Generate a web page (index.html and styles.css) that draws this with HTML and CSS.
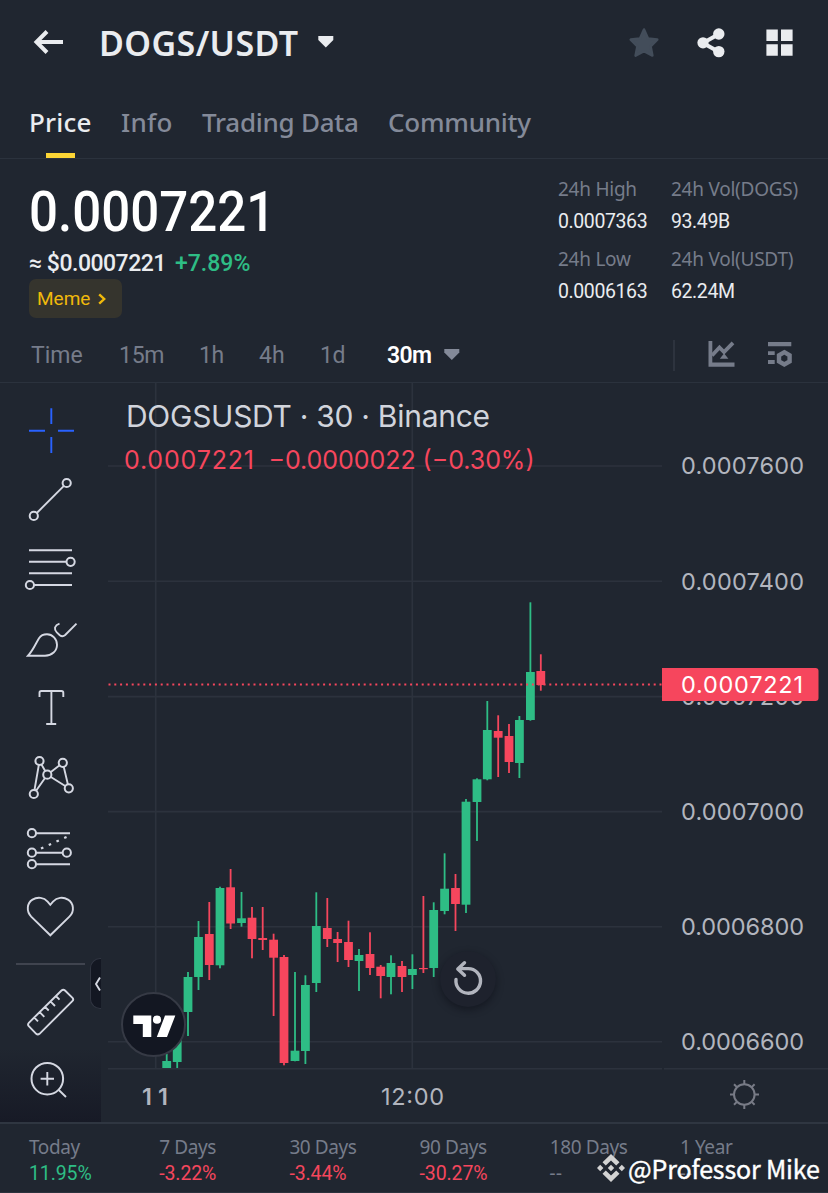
FILE: index.html
```html
<!DOCTYPE html>
<html lang="en">
<head>
    <meta charset="UTF-8">
    <meta name="viewport" content="width=device-width, initial-scale=1.0">
    <title>DOGS/USDT</title>
    <link rel="stylesheet" href="styles.css">
</head>
<body>
    <header class="topbar">
        <svg class="back" viewBox="0 0 32 28"><path d="M30 14H4M14 3.5L3.5 14L14 24.5"/></svg>
        <h1 class="pair">DOGS/USDT</h1>
        <svg class="pair-caret" viewBox="0 0 16 12"><path d="M0.3 0H15.3V4L7.8 11.5L0.3 4Z"/></svg>
        <div class="actions">
            <svg class="star" viewBox="0 0 32 32"><path d="M16 2.5L20 11.4L29.3 12.6L22.6 19.3L24.4 28.6L16 24.2L7.6 28.6L9.4 19.3L2.7 12.6L12 11.4Z"/></svg>
            <svg class="share" viewBox="0 0 32 32"><path d="M24 7L8 16L24 25"/><circle cx="8" cy="15.8" r="5.6"/><circle cx="23.8" cy="7" r="5.7"/><circle cx="23.8" cy="24.6" r="5.7"/></svg>
            <svg class="grid-icon" viewBox="0 0 32 32"><path d="M3.4 2.5h11.4v11.4H3.4zM18 2.5h11.6v11.4H18zM3.4 17.2h11.4v11.6H3.4zM18 17.2h11.6v11.6H18z"/></svg>
        </div>
    </header>

    <nav class="tabs">
        <span class="tab active">Price</span>
        <span class="tab info">Info</span>
        <span class="tab trading">Trading Data</span>
        <span class="tab community">Community</span>
    </nav>

    <section class="summary">
        <div class="quote">
            <div class="last-price">0.0007221</div>
            <div class="converted"><span class="fiat">≈ $0.0007221</span><span class="change">+7.89%</span></div>
            <div class="tag">Meme <svg viewBox="0 0 8 12"><path d="M1.2 1.3L6.2 6L1.2 10.7"/></svg></div>
        </div>
        <dl class="stats">
            <div><dt>24h High</dt><dd>0.0007363</dd></div>
            <div><dt>24h Vol(DOGS)</dt><dd>93.49B</dd></div>
            <div><dt>24h Low</dt><dd>0.0006163</dd></div>
            <div><dt>24h Vol(USDT)</dt><dd>62.24M</dd></div>
        </dl>
    </section>

    <div class="intervals">
        <span class="interval time">Time</span>
        <span class="interval m15">15m</span>
        <span class="interval h1">1h</span>
        <span class="interval h4">4h</span>
        <span class="interval d1">1d</span>
        <span class="interval current">30m</span>
        <svg class="interval-caret" viewBox="0 0 16 12"><path d="M0.3 0H15.3V3.6L7.8 11L0.3 3.6Z"/></svg>
        <div class="chart-tools">
            <svg viewBox="0 0 32 32"><path d="M5.5 4H9.3V25.4H31.5V29.7H5.5Z"/><path class="line" d="M9 18.5L16.5 10.5L21 15L30 5.8"/><path d="M18.4 13.5H23.8L21.6 17L25.4 21.8H16.8L20.6 17Z"/></svg>
            <svg viewBox="0 0 32 32"><path d="M4 5H27.3V9.3H4ZM4 14.3H10.7V18H4ZM4 23H10.7V27H4Z"/><path class="hex" d="M20.3 15.2L25.6 18.3V24.4L20.3 27.5L15 24.4V18.3Z"/></svg>
        </div>
    </div>

    <main class="chart">
        <aside class="toolbar">
            <svg class="crosshair" viewBox="0 0 56 56"><path d="M28.3 6.3V22M28.3 35V51M6 28.7H22M35 28.7H51"/></svg>
            <svg viewBox="0 0 56 56"><path d="M13.8 41L40.9 13.9"/><circle cx="43.7" cy="11" r="4.1"/><circle cx="10.8" cy="43.9" r="4.1"/></svg>
            <svg viewBox="0 0 56 56"><path d="M6 9.2H49M6 20.8H43.5M6 32.3H49M11 44H49"/><circle cx="47.6" cy="20.8" r="4.1"/><circle cx="6.9" cy="44" r="4.1"/></svg>
            <svg viewBox="0 0 56 56"><path d="M5 44.7C10 39.5 13 32 16 27.2C18 24.2 21 23.3 24 23.3C29.5 23.3 34 28 34 33.7C34 40 29 44.7 22 44.7Z"/><path d="M53.5 12.7L42.2 24Q39.5 26.3 36.8 24.2L33.8 21.4Q31.5 19 32 16.5Q33 13.8 36.5 12.7"/></svg>
            <svg viewBox="0 0 56 56"><path d="M16.5 17V12.8Q16.5 11 18.3 11H38.5Q40.3 11 40.3 12.8V17M28.4 11V44M23.2 44H33.2"/></svg>
            <svg viewBox="0 0 56 56"><path d="M16.5 11L10.8 44L24.3 24.7ZM24.3 24.7L39.8 12.8L45.8 38.3Z"/><circle cx="16.5" cy="11" r="4.1"/><circle cx="39.8" cy="12.8" r="4.1"/><circle cx="24.3" cy="24.7" r="4.1"/><circle cx="10.8" cy="44" r="4.1"/><circle cx="45.8" cy="38.3" r="4.1"/></svg>
            <svg viewBox="0 0 56 56"><path d="M13 13.2H47M13 32.7H40M13 44.2H47"/><path class="dots" d="M18 28.6L43.8 16.8"/><circle cx="8.9" cy="13.2" r="4.1"/><circle cx="8.9" cy="32.7" r="4.1"/><circle cx="43.8" cy="32.7" r="4.1"/><circle cx="8.9" cy="44.2" r="4.1"/></svg>
            <svg viewBox="0 0 56 56"><path d="M27.3 46.3L8.2 27.6C3 22 4 14 9.5 10.6C14.5 7.6 21 8.4 24.6 12.6L27.3 15.8L30 12.6C34 8.4 40 7.6 45 10.6C50.5 14 52 22 46.4 27.6Z"/></svg>
            <hr class="separator">
            <svg viewBox="0 0 56 56"><path d="M38.5 6.5Q40.3 4.8 42 6.5L49.5 13.8Q51 15.5 49.3 17.2L16.5 49.8Q14.8 51.3 13.2 49.8L5.8 42.2Q4.3 40.4 5.8 38.8ZM11.3 33.6L15 37.3M16.7 28.2L21.3 32.8M22 22.8L25.7 26.5M27.4 17.4L32 22M32.8 12L36.5 15.7"/></svg>
            <svg class="zoom-in" viewBox="0 0 56 56"><circle class="open" cx="24.3" cy="26.7" r="15.8"/><path d="M24.3 20V33.4M17.6 26.7H31M35.8 38L43 45"/></svg>
            <div class="collapse"><svg viewBox="0 0 8 16"><path d="M6 1.5L2 8L6 14.5"/></svg></div>
        </aside>

        <div class="plot">
            <svg class="canvas" viewBox="101 383 727 739">
                <g id="grid"></g>
                <g id="candles"></g>
                <path class="last-line" d="M108.5 684.5H662"/>
                <g id="axis"></g>
                <path class="last-tag" d="M662 668H815.5Q818.5 668 818.5 671V698Q818.5 701 815.5 701H662Z"/>
                <text class="last-text" x="681" y="693" textLength="122">0.0007221</text>
                <text class="date" x="142" y="1105" textLength="26">11</text>
                <text class="hour" x="381" y="1105" textLength="63">12:00</text>
                <text class="legend-title" x="126" y="427" textLength="364">DOGSUSDT · 30 · Binance</text>
                <text class="legend-value" x="124" y="468.5" textLength="130">0.0007221</text>
                <text class="legend-value" x="268.5" y="468.5" textLength="266">−0.0000022 (−0.30%)</text>
                <g class="gear">
                    <circle cx="744.3" cy="1094.5" r="10.3"/>
                    <path d="M744.3 1084V1080M744.3 1105V1109M733.8 1094.5H730M754.8 1094.5H759M736.9 1087.1L734 1084.2M751.7 1087.1L754.6 1084.2M736.9 1101.9L734 1104.8M751.7 1101.9L754.6 1104.8"/>
                </g>
            </svg>
            <div class="tv-logo">
                <svg viewBox="0 0 66 66"><path d="M12.3 23.6H30.3V45H21.8V32H12.3ZM44 23.6H54.3L46 45H35.8Z"/><circle cx="36" cy="27.7" r="4.1"/></svg>
            </div>
            <div class="reset">
                <svg viewBox="0 0 56 56"><path d="M16 28.5A12.3 12.3 0 1 0 28.3 17.6H19M24.5 11.7L17.8 18L24.5 24.3"/></svg>
            </div>
        </div>
    </main>

    <footer class="periods">
        <div class="period"><span>Today</span><b class="up">11.95%</b></div>
        <div class="period"><span>7 Days</span><b>-3.22%</b></div>
        <div class="period"><span>30 Days</span><b>-3.44%</b></div>
        <div class="period"><span>90 Days</span><b>-30.27%</b></div>
        <div class="period"><span>180 Days</span><b class="none">--</b></div>
        <div class="period"><span>1 Year</span><b class="none">--</b></div>
        <div class="watermark">
            <svg viewBox="0 0 28 28"><path d="M14 0L22.5 8.3L19.2 11.6L14 6.5L8.8 11.6L5.5 8.3ZM14 28L22.5 19.7L19.2 16.4L14 21.5L8.8 16.4L5.5 19.7ZM3.2 10.8L6.4 14L3.2 17.2L0 14ZM24.8 10.8L28 14L24.8 17.2L21.6 14ZM14 10.8L17.2 14L14 17.2L10.8 14Z"/></svg>
            <span>@Professor Mike</span>
        </div>
    </footer>

    <script src="script.js"></script>
</body>
</html>
```
FILE: styles.css
```css
* {
    box-sizing: border-box;
}

body {
    margin: 0;
    width: 828px;
    height: 1193px;
    overflow: hidden;
    display: flex;
    flex-direction: column;
    background-color: #202630;
    color: #eaecef;
    font-family: "Noto Sans", sans-serif;
}

svg {
    display: block;
    flex: none;
}

.topbar {
    height: 86px;
    padding: 0 33px 0 33px;
    display: flex;
    align-items: center;
}

.back {
    width: 32px;
    height: 28px;
    margin-top: -2px;
    fill: none;
    stroke: #eaecef;
    stroke-width: 4;
}

.pair {
    margin: 0 0 0 34px;
    width: 219px;
    font-size: 34px;
    font-weight: 600;
    line-height: 40px;
    letter-spacing: 0.4px;
}

.pair-caret {
    width: 16px;
    height: 12px;
    margin-top: -3px;
    fill: #eaecef;
}

.actions {
    margin-left: auto;
    display: flex;
    gap: 36px;
    fill: #eaecef;
}

.actions svg {
    width: 32px;
    height: 32px;
}

.actions .star {
    margin-right: -1px;
    fill: #434d5a;
    stroke: #434d5a;
    stroke-width: 2.5;
    stroke-linejoin: round;
}

.share path {
    fill: none;
    stroke: #eaecef;
    stroke-width: 4;
}

.tabs {
    height: 73px;
    padding: 16px 0 0 29px;
    display: flex;
    border-bottom: 1px solid #2b323d;
    font-size: 26px;
    font-weight: 500;
    line-height: 40px;
    letter-spacing: -0.25px;
    color: #848a99;
}

.tab {
    white-space: nowrap;
}

.tab.active {
    width: 92px;
    height: 56px;
    letter-spacing: 0.2px;
    color: #eaecef;
    background: linear-gradient(#fcd535, #fcd535) 17px 100% / 29px 5px no-repeat;
}

.tab.info {
    width: 81px;
    letter-spacing: 0.2px;
}

.tab.trading {
    width: 186px;
}

.summary {
    height: 170px;
    padding: 15px 0 0 29px;
    display: flex;
}

.quote {
    width: 529px;
    font-family: Roboto, sans-serif;
}

.last-price {
    height: 76px;
    color: #fff;
    font-size: 55.5px;
    font-weight: 500;
    line-height: 78px;
    transform: scaleX(0.92);
    transform-origin: 0 0;
}

.converted {
    height: 29px;
    display: flex;
    font-size: 23px;
    font-weight: 500;
    line-height: 28px;
}

.fiat {
    width: 146px;
    letter-spacing: -0.5px;
    white-space: nowrap;
}

.change {
    color: #2ebd85;
}

.tag {
    width: 93px;
    height: 39px;
    padding-left: 8px;
    display: flex;
    align-items: center;
    gap: 8px;
    border-radius: 7px;
    background-color: #35342d;
    color: #f0b90b;
    font-size: 19px;
}

.tag svg {
    width: 8px;
    height: 12px;
    fill: none;
    stroke: #f0b90b;
    stroke-width: 2.4;
}

.stats {
    margin: 0;
    display: grid;
    grid-template-columns: 113px 150px;
    grid-auto-rows: 70px;
}

.stats dt {
    font-size: 19px;
    line-height: 30px;
    letter-spacing: -0.25px;
    color: #767c8a;
    white-space: nowrap;
}

.stats dd {
    margin: 0;
    font-family: Roboto, sans-serif;
    font-size: 19.5px;
    line-height: 35px;
    letter-spacing: -0.4px;
}

.intervals {
    height: 54px;
    padding-left: 31px;
    display: flex;
    align-items: center;
    border-bottom: 1px solid #2b323d;
    font-family: Roboto, sans-serif;
    font-size: 23px;
    color: #767c8a;
}

.interval.time {
    width: 88px;
}

.interval.m15 {
    width: 80px;
    letter-spacing: -0.3px;
}

.interval.h1 {
    width: 60px;
    letter-spacing: -0.4px;
}

.interval.h4 {
    width: 61px;
}

.interval.d1 {
    width: 67px;
    letter-spacing: -0.4px;
}

.interval.current {
    width: 57px;
    color: #fff;
    font-weight: 600;
    letter-spacing: -0.6px;
}

.interval-caret {
    width: 16px;
    height: 12px;
    margin-top: -1px;
    fill: #848a99;
}

.chart-tools {
    height: 31px;
    margin: 0 32px 0 auto;
    padding-left: 28px;
    display: flex;
    gap: 29px;
    border-left: 2px solid #2d333e;
    fill: #767c8a;
}

.chart-tools svg {
    width: 32px;
    height: 32px;
    margin-top: -3px;
}

.chart-tools .line {
    fill: none;
    stroke: #767c8a;
    stroke-width: 3.8;
}

.chart-tools .hex {
    fill: #202630;
    stroke: #767c8a;
    stroke-width: 4.4;
}

.chart {
    height: 739px;
    display: flex;
}

.toolbar {
    position: relative;
    width: 101px;
    padding-top: 12.2px;
    display: flex;
    flex-direction: column;
    align-items: center;
    background: linear-gradient(transparent 90%, #171a26);
}

.toolbar svg {
    width: 56px;
    height: 56px;
    margin: 6.8px 0 6.8px 1px;
    fill: none;
    stroke: #d5d8e2;
    stroke-width: 1.9;
}

.toolbar .crosshair {
    stroke: #2962ff;
}

.toolbar .zoom-in {
    margin-top: 5.6px;
}

.toolbar circle {
    fill: #202630;
    stroke-width: 2;
}

.toolbar .open {
    fill: none;
}

.toolbar .dots {
    stroke-width: 2.2;
    stroke-dasharray: 2.6 5.9;
}

.separator {
    width: 69px;
    margin: 11.4px 0 11.7px;
    border: 0;
    border-top: 2px solid #40444f;
}

.toolbar .collapse {
    position: absolute;
    right: 0;
    top: 575px;
    width: 11px;
    height: 51px;
    padding: 17px 0 0 3px;
    border: 1px solid #303541;
    border-right: 0;
    border-radius: 10px 0 0 10px;
    background-color: #131722;
}

.toolbar .collapse svg {
    width: 8px;
    height: 16px;
    margin: 0;
}

.plot {
    position: relative;
    width: 727px;
}

.canvas {
    width: 727px;
    height: 739px;
    font-family: Inter, sans-serif;
    font-size: 23.5px;
    fill: #b2b5be;
}

.grid-line {
    stroke: #2c323d;
    stroke-width: 1.6;
}

.up-candle {
    fill: #2ebd85;
}

.down-candle {
    fill: #f6465d;
}

.last-line {
    stroke: #f6465d;
    stroke-width: 2;
    stroke-dasharray: 2 3.8;
}

.last-tag {
    fill: #f6465d;
}

.last-text {
    fill: #fff;
}

.date {
    font-weight: 600;
}

.legend-title {
    fill: #d1d4dc;
    font-size: 30px;
}

.legend-value {
    fill: #f6465d;
    font-size: 25px;
}

.gear {
    fill: none;
    stroke: #787b86;
    stroke-width: 2;
}

.tv-logo {
    position: absolute;
    left: 20px;
    top: 609px;
    width: 65px;
    height: 65px;
    border: 2px solid #363a45;
    border-radius: 50%;
    background-color: #131722;
}

.tv-logo svg {
    width: 66px;
    height: 66px;
    margin: -2px;
    fill: #fff;
}

.reset {
    position: absolute;
    left: 339px;
    top: 568px;
    width: 56px;
    height: 56px;
    border-radius: 50%;
    background-color: #1e222d;
    box-shadow: 0 3px 7px rgba(10, 12, 20, 0.5);
}

.reset svg {
    fill: none;
    stroke: #b2b5be;
    stroke-width: 3.4;
    stroke-linecap: round;
    stroke-linejoin: round;
}

.periods {
    position: relative;
    height: 71px;
    padding: 10px 0 0 29px;
    display: flex;
    border-top: 2px solid #2f3641;
    border-bottom: 1px solid #2b323d;
}

.period {
    width: 130.2px;
    display: flex;
    flex-direction: column;
    color: #767c8a;
    font-size: 19px;
    line-height: 26px;
    letter-spacing: -0.4px;
    white-space: nowrap;
}

.period b {
    color: #f6465d;
    font-family: Roboto, sans-serif;
    font-size: 19.5px;
    font-weight: 400;
    line-height: 28px;
    letter-spacing: -0.1px;
}

.period b.up {
    color: #2ebd85;
}

.period b.none {
    color: #767c8a;
    letter-spacing: 1px;
}

.watermark {
    position: absolute;
    left: 597px;
    top: 27px;
    display: flex;
    align-items: center;
    gap: 3px;
    color: #fff;
    font-family: "Noto Sans CJK SC", sans-serif;
    font-size: 25px;
    font-weight: 400;
    line-height: 34px;
    letter-spacing: -0.15px;
    white-space: nowrap;
    -webkit-text-stroke: 0.4px #fff;
}

.watermark svg {
    width: 28px;
    height: 28px;
    fill: #d3d3d3;
}
```
FILE: script.js
```js
const SVG_NS = 'http://www.w3.org/2000/svg';

// x, body top, body bottom, high, low, rising
const candles = [
    [166.7, 1061, 1068, 1054, 1068, 1],
    [177.2, 1030, 1062, 1025, 1068, 1],
    [188, 977, 1012, 972, 1036, 1],
    [198.5, 937, 977, 921, 990, 1],
    [209.3, 934, 965, 902, 980, 0],
    [220, 888, 965.3, 886.7, 968.3, 1],
    [230.6, 887.3, 923.5, 869, 929, 0],
    [241.5, 918.3, 923, 892, 926.7, 1],
    [252, 917.7, 939, 907, 958.3, 0],
    [262.7, 938, 940, 907, 950, 0],
    [273.6, 939.7, 957.7, 933.7, 1016, 0],
    [284, 957, 1063, 955, 1065.3, 0],
    [295, 1050.7, 1061, 972, 1061.3, 1],
    [305.4, 985, 1051, 975.3, 1064, 1],
    [316.3, 926, 983, 892.3, 992, 1],
    [327.3, 928, 939, 898, 947, 0],
    [337.6, 939, 943, 932, 962, 0],
    [348.5, 942, 960, 920.7, 967, 0],
    [359, 955, 961, 949, 991, 1],
    [370, 954, 968, 932.3, 975, 0],
    [380.7, 966.7, 976, 965, 998.3, 0],
    [391, 963, 977, 955.3, 994.3, 1],
    [402, 966, 977, 961, 992, 0],
    [412.4, 969, 975, 954.3, 989, 1],
    [423.4, 968, 969.2, 896, 973, 0],
    [433.7, 910, 968, 902.3, 977, 1],
    [444.6, 888.7, 911, 853.3, 914.3, 1],
    [455.5, 888, 904, 874, 931, 0],
    [466, 801.7, 904.7, 799, 913, 1],
    [477, 779.3, 802, 778.3, 841, 1],
    [487.3, 730, 779.3, 701, 780.3, 1],
    [498.2, 731, 737.7, 715.3, 777, 0],
    [509, 736, 762, 724, 773, 0],
    [519.4, 720, 763, 716, 778, 1],
    [530.4, 672, 720, 602.3, 720.7, 1],
    [540.8, 671, 685, 654.3, 690.7, 0]
];

const levels = [
    [466, '0.0007600'],
    [581.3, '0.0007400'],
    [696.6, '0.0007200'],
    [811.6, '0.0007000'],
    [926.8, '0.0006800'],
    [1041.8, '0.0006600']
];

function add(parent, name, attrs) {
    const el = document.createElementNS(SVG_NS, name);
    for (const key in attrs) {
        el.setAttribute(key, attrs[key]);
    }
    parent.appendChild(el);
    return el;
}

const grid = document.getElementById('grid');
const axis = document.getElementById('axis');
const plot = document.getElementById('candles');

levels.forEach(([y, label]) => {
    add(grid, 'path', { class: 'grid-line', d: `M108 ${y}H662` });
    add(axis, 'text', { x: 681, y: y + 8.2, textLength: 123 }).textContent = label;
});
add(grid, 'path', { class: 'grid-line', d: 'M155.7 383V1068M412.3 383V1068M108 1068.8H662M664 1068.8H828' });

candles.forEach(([x, top, bottom, high, low, up]) => {
    const cls = up ? 'up-candle' : 'down-candle';
    add(plot, 'rect', { class: cls, x: x - 0.9, y: high, width: 1.8, height: low - high });
    add(plot, 'rect', { class: cls, x: x - 4.4, y: top, width: 8.8, height: bottom - top });
});
```
